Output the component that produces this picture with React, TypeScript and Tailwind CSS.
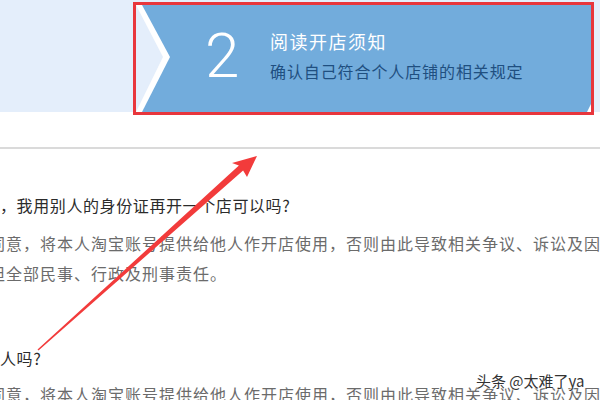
const CJK = "font-['Noto_Sans_CJK_SC',sans-serif]";

function StepChevron() {
  return (
    <svg className="absolute left-0 top-0" width="40" height="107" viewBox="0 0 40 107">
      <polygon points="0,0 6,0 34,52 6,107 0,107" fill="#ffffff" />
      <polygon points="0,0 27,52 0,107" fill="#e4eefb" />
    </svg>
  );
}

function Arrow() {
  return (
    <svg className="absolute left-0 top-0 pointer-events-none" width="600" height="400" viewBox="0 0 600 400">
      <polygon
        points="37.5,349.4 238.9,165.6 232,163 257,156 247,177 243.1,170.4 38.5,350.6"
        fill="#f23b3b"
      />
    </svg>
  );
}

export default function App() {
  return (
    <div className={`relative w-[600px] h-[400px] overflow-hidden bg-white ${CJK}`}>
      {/* step banner */}
      <div className="h-[112px] bg-[#e4eefb] pt-[2px] pl-[133px]">
        <div className="relative w-[461px] h-[113px] border-[3px] border-[#e8363c] bg-[#72acdc] flex items-start">
          <StepChevron />
          <svg className="absolute right-0 bottom-0" width="5" height="8" viewBox="0 0 5 8">
            <polygon points="5,0 5,8 1,8" fill="#ffffff" />
          </svg>
          <span className="ml-[69px] mt-[20px] w-[65px] shrink-0 font-['Roboto',sans-serif] font-light text-[62px] leading-[62px] text-white">
            2
          </span>
          <div className="flex flex-col mt-[24px]">
            <span className="text-[18px] leading-[24px] tracking-[1.5px] text-white">阅读开店须知</span>
            <span className="mt-[6px] text-[16px] leading-[24px] tracking-[0.9px] text-[#1f4f80]">
              确认自己符合个人店铺的相关规定
            </span>
          </div>
        </div>
      </div>

      <div className="h-[35px]" />
      <div className="h-[2px] bg-[#dadada]" />

      {/* article */}
      <div className="flex flex-col">
        <p className="mt-[44px] text-[16px] leading-[24px] tracking-[0.6px] text-[#2b2b2b] whitespace-nowrap">
          ，我用别人的身份证再开一个店可以吗?
        </p>
        <div className="mt-[11px] ml-[-11px] text-[16px] leading-[30px] tracking-[1px] text-[#6b6b6b] whitespace-nowrap">
          <p>同意，将本人淘宝账号提供给他人作开店使用，否则由此导致相关争议、诉讼及因</p>
          <p>担全部民事、行政及刑事责任。</p>
        </div>
        <p className="mt-[58px] text-[16px] leading-[24px] tracking-[0.6px] text-[#2b2b2b] whitespace-nowrap">
          人吗?
        </p>
        <p className="mt-[9px] ml-[-11px] text-[16px] leading-[30px] tracking-[1px] text-[#6b6b6b] whitespace-nowrap">
          同意，将本人淘宝账号提供给他人作开店使用，否则由此导致相关争议、诉讼及因
        </p>
      </div>

      <Arrow />

      <span className="absolute left-[476px] top-[370px] text-[15px] leading-[22px] text-[#333333] whitespace-nowrap [text-shadow:0_0_2px_#fff,0_0_2px_#fff,0_0_2px_#fff]">
        头条 @太难了ya
      </span>
    </div>
  );
}
